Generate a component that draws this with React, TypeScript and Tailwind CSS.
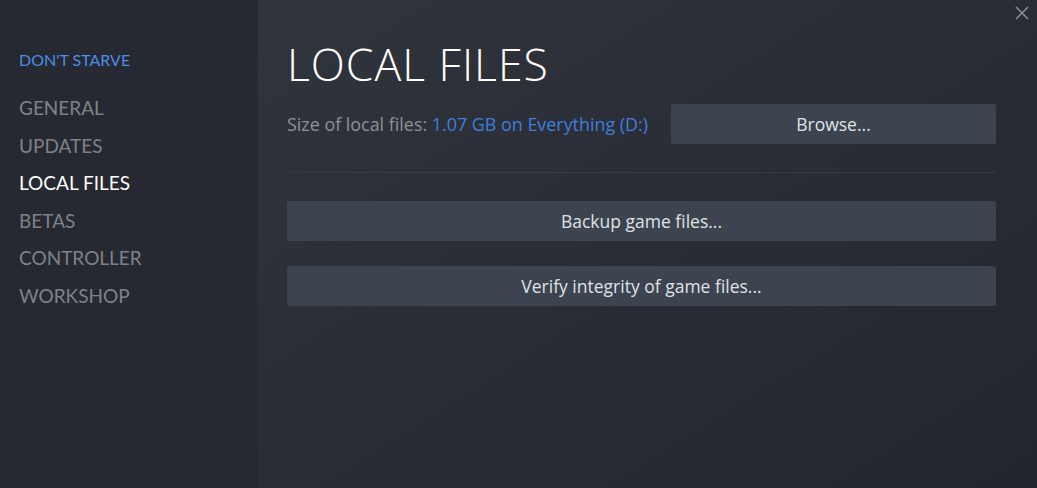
import React from 'react';

const navItems = ['GENERAL', 'UPDATES', 'LOCAL FILES', 'BETAS', 'CONTROLLER', 'WORKSHOP'];

const App = () => {
  return (
    <div className="flex h-[488px] w-[1037px] overflow-hidden font-['Lato',sans-serif]">
      {/* Sidebar */}
      <div className="w-[258px] shrink-0 bg-[#262931] pl-[19px] pt-[49px]">
        <div className="mb-[18px] text-[16px] leading-[22px] text-[#4a8ee6]">DON'T STARVE</div>
        <ul className="flex flex-col">
          {navItems.map((item) => (
            <li
              key={item}
              className={`h-[37.5px] text-[19px] leading-[37.5px] ${
                item === 'LOCAL FILES' ? 'text-white' : 'text-[#7d828a]'
              }`}
            >
              {item}
            </li>
          ))}
        </ul>
      </div>

      {/* Main panel */}
      <div className="relative flex-1 bg-gradient-to-br from-[#30343c] via-[#2a2d35] to-[#23252c] pl-[29px] pr-[41px] pt-[36px] font-['Open_Sans',sans-serif]">
        <button className="absolute right-[7px] top-[5px] text-[#8a8f98]">
          <svg width="16" height="16" viewBox="0 0 16 16" fill="none" stroke="currentColor" strokeWidth="1.5">
            <path d="M2 2 L14 14 M14 2 L2 14" />
          </svg>
        </button>

        <h1 className="text-[44.5px] font-light leading-[56px] tracking-[1px] text-white">LOCAL FILES</h1>

        <div className="mt-[12px] flex items-center justify-between">
          <div className="text-[17.9px] text-[#8b929a]">
            Size of local files: <span className="text-[#3d7fde]">1.07 GB on Everything (D:)</span>
          </div>
          <button className="h-[40px] w-[325px] rounded-[2px] bg-[#3d4450] text-[17.5px] text-[#dfe3e6]">
            Browse...
          </button>
        </div>

        <div className="mt-[28px] h-px bg-[#363a43]" />

        <div className="mt-[28px] flex flex-col gap-[25px]">
          <button className="h-[40px] w-full rounded-[2px] bg-[#3d4450] text-[17.5px] text-[#dfe3e6]">
            Backup game files...
          </button>
          <button className="h-[40px] w-full rounded-[2px] bg-[#3d4450] text-[17.5px] text-[#dfe3e6]">
            Verify integrity of game files...
          </button>
        </div>
      </div>
    </div>
  );
};

export default App;
